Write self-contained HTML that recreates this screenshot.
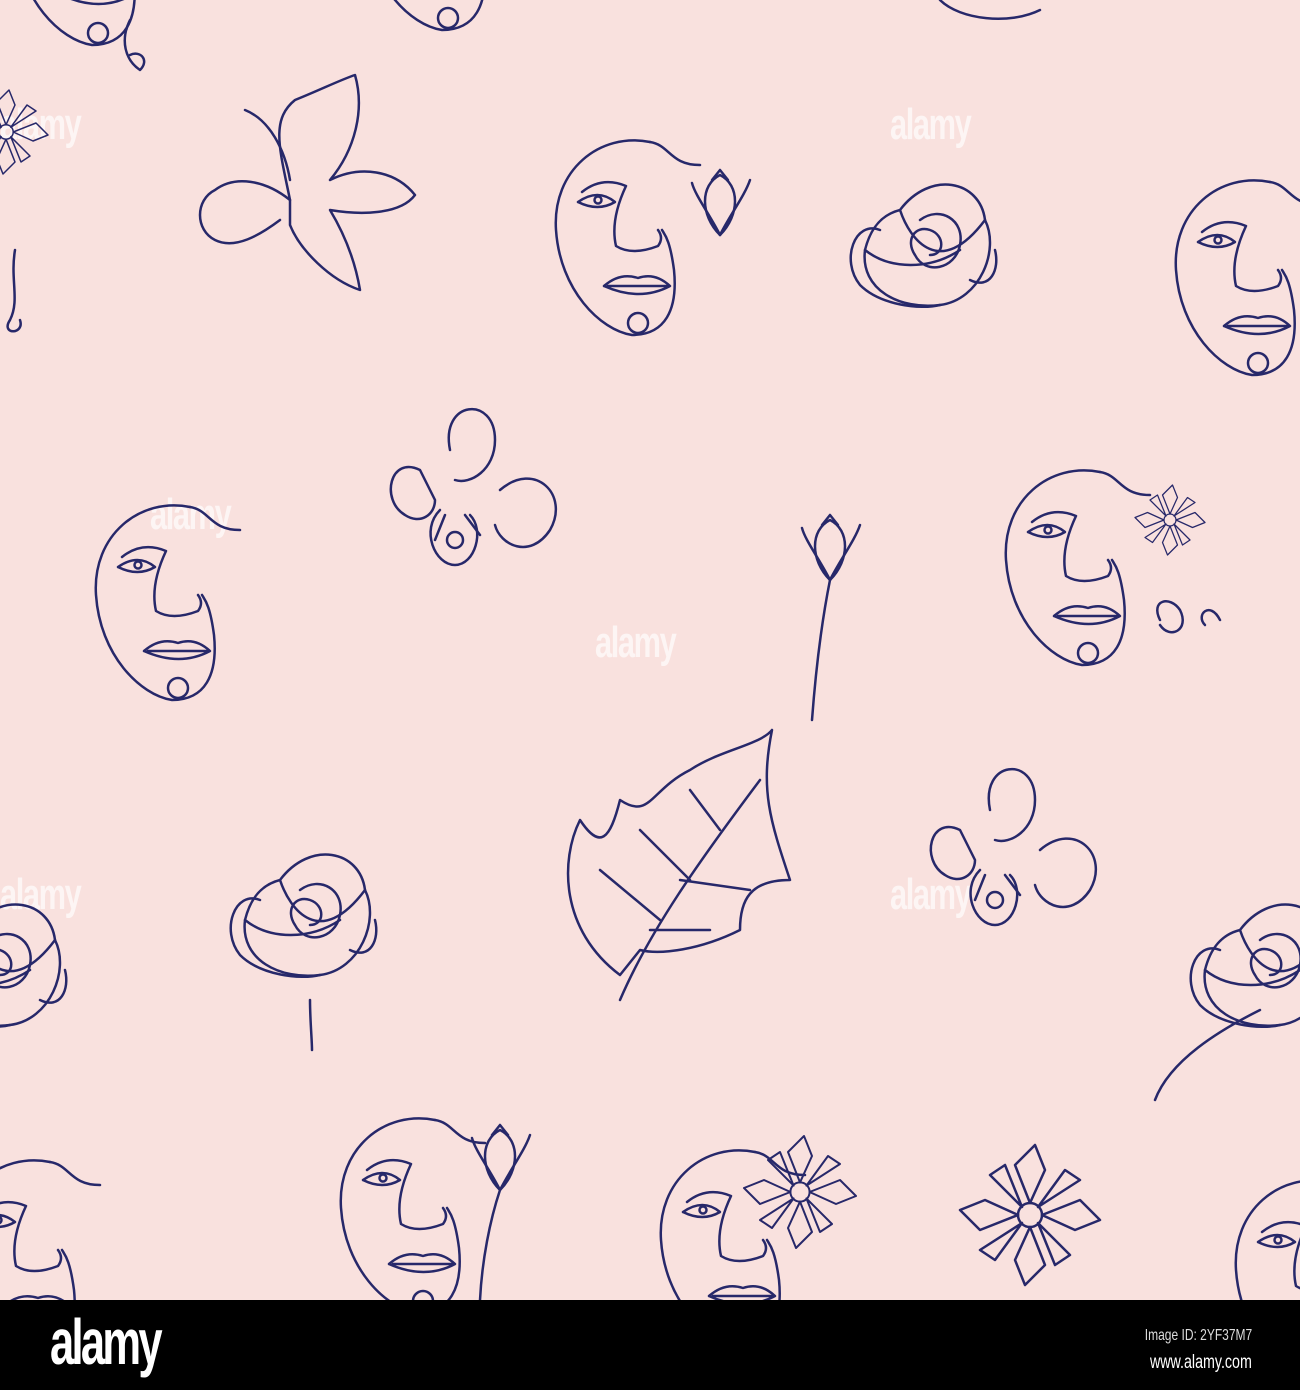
<!DOCTYPE html>
<html><head><meta charset="utf-8"><style>
html,body{margin:0;padding:0}
body{width:1300px;height:1390px;position:relative;overflow:hidden;background:#f9e1de;font-family:"Liberation Sans",sans-serif}
svg{position:absolute;left:0;top:0}
.bar{position:absolute;left:0;top:1300px;width:1300px;height:90px;background:#000}
.logo{position:absolute;left:50px;top:10px;color:#fff;font-size:64px;font-weight:bold;letter-spacing:-4px;transform:scaleX(0.68);transform-origin:left top;line-height:64px}
.r1{position:absolute;right:48px;top:27px;color:#ddd;font-size:16px;transform:scaleX(0.75);transform-origin:right top}
.r2{position:absolute;right:48px;top:52px;color:#fff;font-size:19px;transform:scaleX(0.75);transform-origin:right top}
.wm{position:absolute;color:rgba(255,255,255,0.65);font-size:44px;font-weight:bold;transform:scaleX(0.7);transform-origin:left top;letter-spacing:-2px}
</style></head><body>
<div class="wm" style="left:0;top:100px">alamy</div>
<div class="wm" style="left:890px;top:100px">alamy</div>
<div class="wm" style="left:595px;top:618px">alamy</div>
<div class="wm" style="left:890px;top:870px">alamy</div>
<div class="wm" style="left:0;top:870px">alamy</div>
<div class="wm" style="left:150px;top:490px">alamy</div>
<svg width="1300" height="1300" viewBox="0 0 1300 1300" fill="none" stroke="#27286a" stroke-width="2.5" stroke-linecap="round" stroke-linejoin="round">
<defs>
<g id="face">
<path d="M110 12 C60 2,12 40,16 100 C20 160,60 200,92 205 C125 205,138 180,134 140 C130 110,125 105,122 100"/>
<path d="M110 12 C130 15,130 35,160 35"/>
<path d="M38 72 Q58 58 75 72 Q58 82 38 72"/><circle cx="58" cy="70" r="3.5"/>
<path d="M42 62 Q62 46 86 56 Q70 90 76 116 Q92 126 118 116 Q124 108 118 100"/>
<path d="M64 156 Q80 142 98 148 Q115 142 130 156 Q100 172 64 156 M68 156 L128 156"/>
<circle cx="98" cy="193" r="10"/>
</g>
<g id="bud">
<path d="M0 60 C-20 40,-20 10,0 0 C20 10,20 40,0 60 Z"/>
<path d="M0 60 C10 40,25 20,30 5 M0 60 C-10 40,-25 20,-28 8"/>
<path d="M-8 5 L0 -5 L8 5"/>
</g>
<g id="rose">
<path d="M0 0 C30 -40,80 -30,85 10 C100 40,80 90,40 95 C0 100,-40 80,-35 40 C-30 20,-20 5,0 0 Z"/>
<path d="M20 10 C40 -5,65 10,60 35 C55 60,25 65,15 45 C5 30,15 15,30 20 C45 25,45 45,30 45"/>
<path d="M-20 20 C-45 10,-60 50,-40 75 C-20 95,20 100,40 95"/>
<path d="M70 70 C90 80,100 60,95 40"/>
<path d="M0 0 C10 30,40 70,85 10 M-35 40 C-10 60,30 60,60 40"/>
</g>
<g id="orchid">
<path d="M0 0 C-30 -15,-40 30,-15 45 C0 55,15 45,15 30 Z"/>
<path d="M30 -20 C20 -70,75 -75,75 -30 C75 0,50 15,35 10"/>
<path d="M80 20 C115 -10,150 25,130 60 C110 90,80 75,75 55"/>
<path d="M20 40 C0 60,15 95,35 95 C55 95,65 60,50 45"/>
<circle cx="35" cy="70" r="8"/>
<path d="M25 45 L15 70 M45 45 L60 65"/>
</g>
<g id="flower">
<circle cx="0" cy="0" r="12"/>
<path d="M0 -12 L-15 -50 L5 -70 L15 -45 Z M12 0 L50 -15 L70 5 L45 15 Z M0 12 L15 50 L-5 70 L-15 45 Z M-12 0 L-50 15 L-70 -5 L-45 -15 Z"/>
<path d="M8 -8 L35 -45 L50 -35 Z M8 8 L40 40 L25 50 Z M-8 8 L-35 45 L-50 35 Z M-8 -8 L-40 -40 L-25 -50 Z"/>
</g>
</defs>
<use href="#face" x="540" y="130"/>
<use href="#face" x="1160" y="170"/>
<use href="#face" x="80" y="495"/>
<use href="#face" x="990" y="460"/>
<use href="#face" x="325" y="1108"/>
<use href="#face" x="645" y="1140"/>
<use href="#face" x="-60" y="1150"/>
<use href="#face" x="0" y="-160"/>
<use href="#face" x="350" y="-175"/>
<use href="#face" x="1220" y="1170"/>
<use href="#bud" x="720" y="175"/>
<use href="#bud" x="500" y="1130"/>
<use href="#bud" x="830" y="520"/>
<path d="M830 580 C820 630,815 680,812 720"/>
<path d="M500 1190 C490 1220,482 1260,480 1300"/>
<path d="M290 200 C280 150,270 120,295 100 C320 90,340 80,355 75 C365 110,355 150,330 180 C360 165,395 170,415 195 C400 215,360 215,330 210 C345 235,355 260,360 290 C330 280,300 250,290 225 Z"/>
<path d="M245 110 C270 120,285 150,290 180"/>
<path d="M290 200 C265 180,235 175,215 190 C195 200,195 230,215 240 C235 250,260 235,280 220"/>
<use href="#rose" x="900" y="210"/>
<use href="#rose" x="280" y="880"/>
<use href="#rose" x="-30" y="930"/>
<use href="#rose" x="1240" y="930"/>
<path d="M1260 1010 C1220 1030,1170 1060,1155 1100"/>
<path d="M310 1000 C310 1020,312 1040,312 1050"/>
<use href="#orchid" x="420" y="470"/>
<use href="#orchid" x="960" y="830"/>
<path d="M620 975 C560 930,560 860,580 820 C600 850,610 840,620 800 C650 820,650 790,690 770 C720 750,760 745,772 730 C760 790,770 820,790 880 C750 880,740 900,740 930 C700 950,660 955,640 950 Z"/>
<path d="M620 1000 C650 930,700 860,760 780 M660 920 L600 870 M690 880 L640 830 M720 830 L690 790 M650 930 L710 930 M680 880 L750 890"/>
<use href="#flower" x="1030" y="1215"/>
<use href="#flower" x="800" y="1190" transform="translate(160 240) scale(0.8)"/>
<use href="#flower" x="10" y="220" transform="scale(0.6)"/>
<path d="M15 250 C10 280,20 300,10 320 C0 335,25 335,20 320"/>
<path d="M1160 620 C1150 600,1170 595,1180 610 C1190 630,1170 640,1160 625 M1205 625 C1195 615,1210 600,1220 620"/>
<use href="#flower" x="0" y="0" transform="translate(1170 520) scale(0.5)"/>
<path d="M130 20 C120 40,125 60,140 70 C150 60,140 50,130 55"/>
<path d="M940 0 C960 20,1010 25,1040 10"/>
</svg>
<div class="bar">
<div class="logo">alamy</div>
<div class="r1">Image ID: 2YF37M7</div>
<div class="r2">www.alamy.com</div>
</div>
</body></html>
